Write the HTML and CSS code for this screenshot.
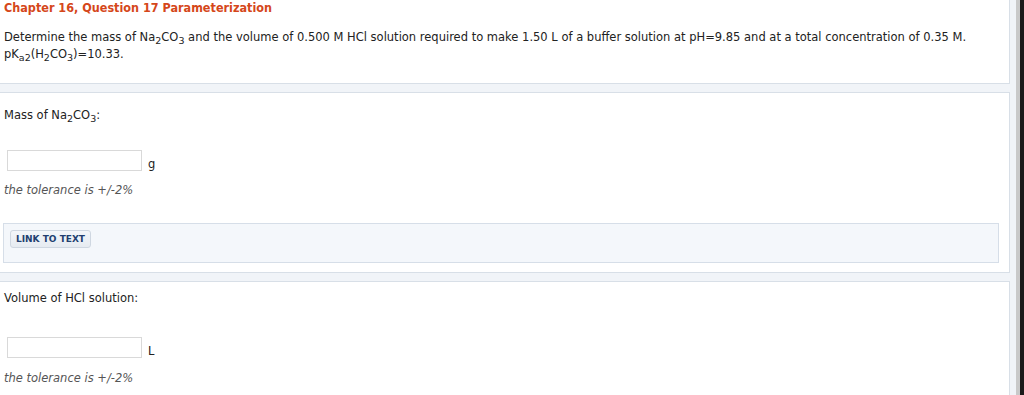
FILE: index.html
```html
<!DOCTYPE html>
<html>
<head>
<meta charset="utf-8">
<link rel="stylesheet" href="styles.css">
</head>
<body>
<div class="frame">
  <div class="main">
    <section class="panel intro">
      <h1 class="title">Chapter 16, Question 17 Parameterization</h1>
      <p class="question">Determine the mass of Na<sub>2</sub>CO<sub>3</sub> and the volume of 0.500 M HCl solution required to make 1.50 L of a buffer solution at pH=9.85 and at a total concentration of 0.35 M.<br>pK<sub>a2</sub>(H<sub>2</sub>CO<sub>3</sub>)=10.33.</p>
    </section>
    <section class="panel part part-a">
      <div class="label">Mass of Na<sub>2</sub>CO<sub>3</sub>:</div>
      <div class="answer-row">
        <input class="answer" type="text">
        <span class="unit">g</span>
      </div>
      <div class="tolerance">the tolerance is +/-2%</div>
      <div class="links">
        <span class="link-btn">LINK TO TEXT</span>
      </div>
    </section>
    <section class="panel part part-b">
      <div class="label">Volume of HCl solution:</div>
      <div class="answer-row">
        <input class="answer" type="text">
        <span class="unit">L</span>
      </div>
      <div class="tolerance">the tolerance is +/-2%</div>
    </section>
  </div>
  <div class="edge"></div>
</div>
</body>
</html>
```

FILE: styles.css
```css
html, body {
  margin: 0;
  padding: 0;
  height: 100%;
  overflow: hidden;
}
body {
  background: #f1f4f8;
  font-family: Verdana, "DejaVu Sans", sans-serif;
  font-size: 11.5px;
  color: #222;
}
.frame {
  display: flex;
  height: 395px;
}
.main {
  width: 1016px;
  display: flex;
  flex-direction: column;
  gap: 8px;
  padding-right: 6px;
  box-sizing: border-box;
}
.edge {
  width: 8px;
  background: linear-gradient(to right, #c9c9c9 0, #c9c9c9 4px, #1a1a1a 4px, #1a1a1a 100%);
}
.panel {
  background: #fff;
  border: 1px solid #d8dfe7;
  border-left: none;
  padding-left: 4px;
}
.intro {
  border-top: none;
  padding-bottom: 20px;
}
.title {
  margin: 0;
  font-family: "DejaVu Sans Condensed", "DejaVu Sans", sans-serif;
  font-stretch: condensed;
  font-size: 12.5px;
  line-height: 15px;
  font-weight: bold;
  color: #d5471a;
}
.question {
  margin: 14px 0 0;
  line-height: 17px;
}
sub {
  font-size: 9.5px;
  line-height: 0;
  vertical-align: -3px;
}
.label {
  line-height: 17px;
}
.part-a {
  padding-top: 14px;
  padding-bottom: 9px;
}
.part-b {
  padding-top: 8px;
  flex: 1;
  border-bottom: none;
}
.answer-row {
  display: flex;
  align-items: flex-end;
  gap: 6px;
  margin-left: 3px;
}
.part-a .answer-row {
  margin-top: 26px;
}
.part-b .answer-row {
  margin-top: 30px;
}
.answer {
  width: 135px;
  height: 21px;
  flex: none;
  box-sizing: border-box;
  border: 1px solid #d9d9d9;
  margin: 0;
  padding: 0 3px;
  background: #fff;
  font: inherit;
}
.unit {
  line-height: 14px;
}
.tolerance {
  margin-top: 11px;
  line-height: 17px;
  font-style: italic;
  color: #555;
}
.part-b .tolerance {
  margin-top: 12px;
}
.links {
  margin: 24px 10px 0 -1px;
  background: #f4f7fb;
  border: 1px solid #d6dee8;
  padding: 6px 6px 14px;
  display: flex;
}
.link-btn {
  display: inline-block;
  height: 18px;
  box-sizing: border-box;
  padding: 0 5px;
  line-height: 16px;
  border: 1px solid #cfd7e1;
  border-radius: 3px;
  background: linear-gradient(#f3f6fa, #e6ebf1);
  font-size: 9px;
  font-weight: bold;
  color: #223f70;
}
```
